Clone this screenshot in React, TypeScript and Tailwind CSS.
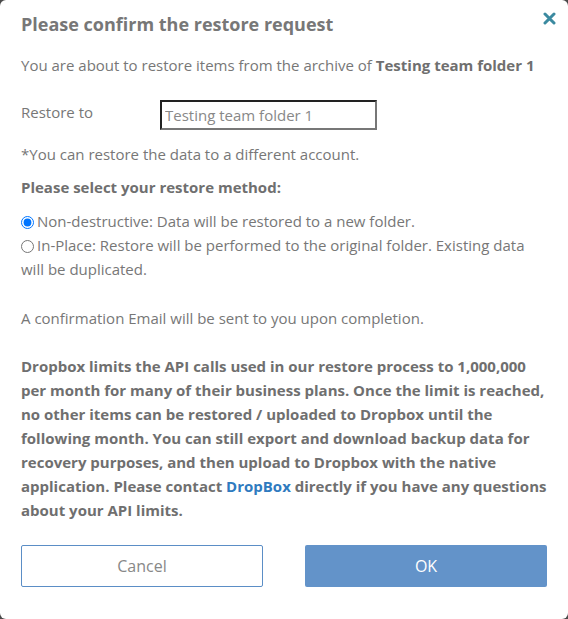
import { useState } from "react";

export default function App() {
  const [method, setMethod] = useState("non");

  return (
    <div className="w-[568px] h-[619px] bg-[#4a4a4a]">
      <div
        className="relative w-full h-full bg-white rounded-md pl-[21px] pr-[21px] pt-[12px] text-[15px] leading-[24px] text-[#777]"
        style={{ fontFamily: '"Open Sans", "Liberation Sans", sans-serif' }}
      >
        {/* Header */}
        <h1 className="text-[18px] leading-[24px] font-bold text-[#777]">Please confirm the restore request</h1>
        <button className="absolute top-[11px] right-[12px] w-[14px] h-[14px] flex items-center justify-center text-[#3b8aa0] cursor-pointer">
          <svg width="13" height="13" viewBox="0 0 13 13" fill="none" stroke="currentColor" strokeWidth="3" strokeLinecap="round">
            <path d="M2 2L11 11M11 2L2 11" />
          </svg>
        </button>

        <p className="mt-[17px]">
          You are about to restore items from the archive of <b className="text-[#6f6f6f]">Testing team folder 1</b>
        </p>

        {/* Restore to */}
        <div className="mt-[23px] flex items-start">
          <span className="w-[139px]">Restore to</span>
          <input
            defaultValue="Testing team folder 1"
            className="w-[217px] h-[30px] px-[3px] border-2 border-t-[#222] border-l-[#222] border-r-[#777] border-b-[#777] text-[15px] text-[#888] outline-none"
            style={{ fontFamily: '"Open Sans", "Liberation Sans", sans-serif' }}
          />
        </div>

        <p className="mt-[12px]">*You can restore the data to a different account.</p>

        <p className="mt-[9px] font-bold text-[#6f6f6f]">Please select your restore method:</p>

        <div className="mt-[10px]">
          <label className="block">
            <input
              type="radio"
              name="method"
              checked={method === "non"}
              onChange={() => setMethod("non")}
              className="mr-[3px] align-[-2px]"
            />
            Non-destructive: Data will be restored to a new folder.
          </label>
          <label className="block">
            <input
              type="radio"
              name="method"
              checked={method === "in"}
              onChange={() => setMethod("in")}
              className="mr-[3px] align-[-2px]"
            />
            In-Place: Restore will be performed to the original folder. Existing data will be duplicated.
          </label>
        </div>

        <p className="mt-[25px]">A confirmation Email will be sent to you upon completion.</p>

        <p className="mt-[24px] font-bold text-[#6f6f6f]">
          Dropbox limits the API calls used in our restore process to 1,000,000 per month for many of their business plans. Once the limit is reached, no other items can be restored / uploaded to Dropbox until the following month. You can still export and download backup data for recovery purposes, and then upload to Dropbox with the native application. Please contact{" "}
          <a className="text-[#2f7bbf]">DropBox</a> directly if you have any questions about your API limits.
        </p>

        {/* Actions */}
        <div className="mt-[23px] flex justify-between">
          <button className="w-[242px] h-[42px] border border-[#5b8ec6] rounded-[2px] bg-white text-[16px] text-[#888] cursor-pointer">
            Cancel
          </button>
          <button className="w-[242px] h-[42px] rounded-[2px] bg-[#6393c9] text-[16px] text-white cursor-pointer">
            OK
          </button>
        </div>
      </div>
    </div>
  );
}
